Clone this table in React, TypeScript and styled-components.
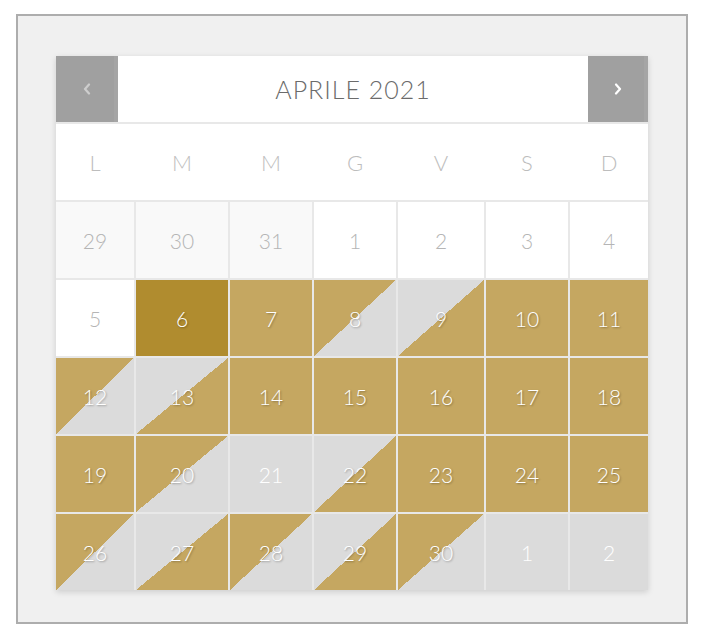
import styled, { createGlobalStyle, css } from "styled-components";

const GlobalStyle = createGlobalStyle`
  body {
    margin: 0;
    background: #ffffff;
    font-family: "Lato", "Liberation Sans", sans-serif;
  }
`;

const GOLD = "#c5a761";
const GREY = "#dbdbdb";
const COLUMNS = "78px 92px 82px 82px 86px 82px 78px";

const Frame = styled.div`
  box-sizing: border-box;
  width: 672px;
  height: 610px;
  margin: 14px 0 0 16px;
  padding: 40px 38px 0 38px;
  border: 2px solid #adadad;
  background: #f0f0f0;
`;

const Calendar = styled.div`
  width: 592px;
  background: #e8e8e8;
  box-shadow: 0 2px 6px rgba(0, 0, 0, 0.15);
  display: flex;
  flex-direction: column;
  gap: 2px;
`;

const Header = styled.div`
  height: 66px;
  display: grid;
  grid-template-columns: 62px 1fr 60px;
  background: #ffffff;
`;

const NavButton = styled.button<{ $dim?: boolean }>`
  border: none;
  padding: 0;
  background: #a0a0a0;
  box-shadow: inset -4px 0 0 rgba(255, 255, 255, 0.06);
  display: flex;
  align-items: center;
  justify-content: center;
  color: ${(p) => (p.$dim ? "#cdcdcd" : "#ffffff")};
  cursor: pointer;
`;

const Title = styled.div`
  display: flex;
  align-items: center;
  justify-content: center;
  font-size: 25px;
  font-weight: 300;
  letter-spacing: 1px;
  color: #6b6b6b;
`;

const WeekRow = styled.div`
  height: 76px;
  display: grid;
  grid-template-columns: ${COLUMNS};
  column-gap: 2px;
  background: #ffffff;
`;

const WeekDay = styled.div`
  display: flex;
  align-items: center;
  justify-content: center;
  font-size: 22px;
  font-weight: 300;
  color: #bdbdbd;
`;

const Days = styled.div`
  display: grid;
  grid-template-columns: ${COLUMNS};
  grid-auto-rows: 76px;
  gap: 2px;
`;

type Kind = "prev" | "free" | "selected" | "busy" | "out" | "in" | "full" | "next";

const lightText = css`
  color: #ffffff;
  text-shadow: 1px 1px 2px rgba(0, 0, 0, 0.3);
`;

const backgrounds: Record<Kind, string> = {
  prev: "#f9f9f9",
  free: "#ffffff",
  selected: "#b08c2f",
  busy: GOLD,
  out: `linear-gradient(to bottom right, ${GOLD} 50%, ${GREY} 50%)`,
  in: `linear-gradient(to bottom right, ${GREY} 50%, ${GOLD} 50%)`,
  full: GREY,
  next: GREY,
};

const Day = styled.div<{ $kind: Kind }>`
  display: flex;
  align-items: center;
  justify-content: center;
  font-size: 21px;
  font-weight: 300;
  background: ${(p) => backgrounds[p.$kind]};
  ${(p) => (p.$kind === "prev" || p.$kind === "free" ? "color: #b5b5b5;" : lightText)}
  ${(p) => (p.$kind === "next" || p.$kind === "full" ? "text-shadow: none;" : "")}
`;

const Chevron = ({ dir }: { dir: "left" | "right" }) => (
  <svg width="8" height="12" viewBox="0 0 8 12">
    <polyline
      points={dir === "left" ? "6,1.5 2,6 6,10.5" : "2,1.5 6,6 2,10.5"}
      fill="none"
      stroke="currentColor"
      strokeWidth="2.2"
      strokeLinecap="round"
      strokeLinejoin="round"
    />
  </svg>
);

const weekDays = ["L", "M", "M", "G", "V", "S", "D"];

const days: [number, Kind][] = [
  [29, "prev"], [30, "prev"], [31, "prev"], [1, "free"], [2, "free"], [3, "free"], [4, "free"],
  [5, "free"], [6, "selected"], [7, "busy"], [8, "out"], [9, "in"], [10, "busy"], [11, "busy"],
  [12, "out"], [13, "in"], [14, "busy"], [15, "busy"], [16, "busy"], [17, "busy"], [18, "busy"],
  [19, "busy"], [20, "out"], [21, "full"], [22, "in"], [23, "busy"], [24, "busy"], [25, "busy"],
  [26, "out"], [27, "in"], [28, "out"], [29, "in"], [30, "out"], [1, "next"], [2, "next"],
];

const App = () => {
  return (
    <>
      <GlobalStyle />
      <Frame>
        <Calendar>
          <Header>
            <NavButton $dim aria-label="Mese precedente">
              <Chevron dir="left" />
            </NavButton>
            <Title>APRILE 2021</Title>
            <NavButton aria-label="Mese successivo">
              <Chevron dir="right" />
            </NavButton>
          </Header>
          <WeekRow>
            {weekDays.map((d, i) => (
              <WeekDay key={i}>{d}</WeekDay>
            ))}
          </WeekRow>
          <Days>
            {days.map(([n, kind], i) => (
              <Day key={i} $kind={kind}>
                {n}
              </Day>
            ))}
          </Days>
        </Calendar>
      </Frame>
    </>
  );
};

export default App;
